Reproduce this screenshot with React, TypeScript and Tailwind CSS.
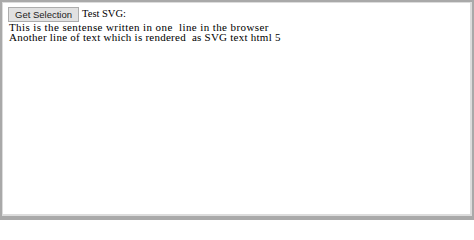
export default function App() {
  return (
    <div className="w-[474px] h-[220px] bg-[#a9a9a9] pt-[2px] pl-[2px] pr-[2px] pb-[4px]">
      <div className="h-full w-full bg-white border-t border-l border-b-2 border-r-2 border-[#dcdcdc] pl-[5px] pt-[4px] font-['Liberation_Serif',serif] text-[11px] leading-[10px] tracking-[0.4px] text-black">
        <div className="flex h-[15px] items-center gap-[3px] tracking-normal">
          <button className="h-[15px] px-[6px] border border-[#adadad] bg-[#e1e1e1] font-['Liberation_Sans',sans-serif] text-[9.5px] leading-none text-[#222]">
            Get Selection
          </button>
          <span className="text-[10.5px] leading-none">Test SVG:</span>
        </div>
        <div className="pl-px">This is the sentense written in one&nbsp; line in the browser</div>
        <div className="pl-px tracking-[0.25px]">Another line of text which is rendered&nbsp; as SVG text html 5</div>
      </div>
    </div>
  );
}
